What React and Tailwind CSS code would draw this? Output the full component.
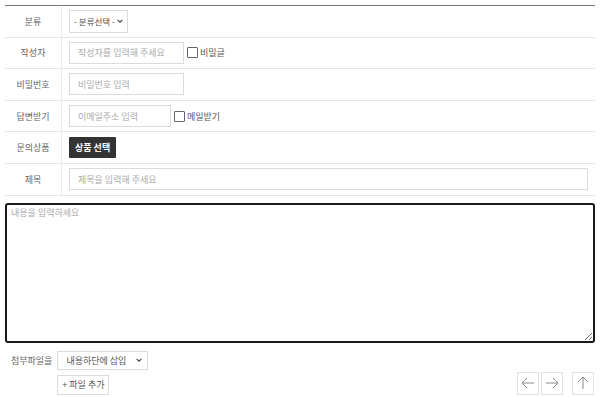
const font = { fontFamily: '"Noto Sans CJK KR", "Noto Sans", sans-serif' };

function Chevron({ className = '' }) {
    return (
        <svg viewBox="0 0 10 6" className={className} fill="none" stroke="#444" strokeWidth="1.8">
            <path d="M1 1l4 4 4-4" />
        </svg>
    );
}

function Check({ label }) {
    return (
        <div className="flex items-center gap-[2px]">
            <span className="w-[11px] h-[11px] border border-[#666] rounded-[1px] bg-white" />
            <span className="text-[9px] leading-none text-[#555]">{label}</span>
        </div>
    );
}

function Field({ w, placeholder }) {
    return (
        <div
            className={`${w} h-[22px] border border-[#dcdcdc] bg-white flex items-center px-[8px] text-[9px] leading-none text-[#aaa]`}
        >
            {placeholder}
        </div>
    );
}

function Row({ label, children }) {
    return (
        <div className="grid grid-cols-[57px_1fr] h-[31.6px] border-b border-[#e6e6e6]">
            <div className="flex items-center justify-center border-r border-[#ececec] text-[9px] leading-none text-[#666]">
                {label}
            </div>
            <div className="flex items-center pl-[7px] pr-[7px] gap-[3px]">{children}</div>
        </div>
    );
}

function ArrowBox({ children }) {
    return (
        <div className="w-[22px] h-[23px] border border-[#e2e2e2] bg-white flex items-center justify-center">
            <svg viewBox="0 0 16 16" className="w-[16px] h-[16px]" fill="none" stroke="#888" strokeWidth="1">
                {children}
            </svg>
        </div>
    );
}

export default function App() {
    return (
        <div className="w-[600px] h-[397px] bg-white overflow-hidden px-[5px] pt-[5px]" style={font}>
            {/* board table */}
            <div className="border-t border-[#777]">
                <Row label="분류">
                    <div className="w-[59px] h-[23px] border border-[#dcdcdc] flex items-center justify-between pl-[4px] pr-[4px] text-[8.5px] leading-none text-[#555] whitespace-nowrap">
                        <span>- 분류선택 -</span>
                        <Chevron className="w-[6px] h-[4px]" />
                    </div>
                </Row>
                <Row label="작성자">
                    <Field w="w-[115px]" placeholder="작성자를 입력해 주세요" />
                    <Check label="비밀글" />
                </Row>
                <Row label="비밀번호">
                    <Field w="w-[115px]" placeholder="비밀번호 입력" />
                </Row>
                <Row label="답변받기">
                    <Field w="w-[102px]" placeholder="이메일주소 입력" />
                    <Check label="메일받기" />
                </Row>
                <Row label="문의상품">
                    <div className="h-[21px] px-[6px] bg-[#333] text-white text-[9px] font-bold leading-none flex items-center rounded-[1px]">
                        상품 선택
                    </div>
                </Row>
                <Row label="제목">
                    <Field w="flex-1" placeholder="제목을 입력해 주세요" />
                </Row>
            </div>

            {/* content */}
            <textarea
                placeholder="내용을 입력하세요"
                className="mt-[7px] block w-full h-[140px] border-2 border-[#1a1a1a] rounded-[3px] px-[4px] py-[2px] text-[9px] leading-[12px] placeholder:text-[#aaa] outline-none"
            />

            {/* attachments */}
            <div className="flex justify-between mt-[8px]">
                <div className="flex pl-[6px] gap-[5px]">
                    <span className="text-[9px] leading-none text-[#666] pt-[5px]">첨부파일을</span>
                    <div className="flex flex-col gap-[5px]">
                        <div className="w-[91px] h-[19px] border border-[#dcdcdc] flex items-center justify-between pl-[8px] pr-[5px] text-[9px] leading-none text-[#555]">
                            <span>내용하단에 삽입</span>
                            <Chevron className="w-[6px] h-[4px]" />
                        </div>
                        <div className="w-[52px] h-[20px] border border-[#dcdcdc] flex items-center justify-center text-[9px] leading-none text-[#555]">
                            + 파일 추가
                        </div>
                    </div>
                </div>
                <div className="flex items-end gap-[9px] pr-[1px]">
                    <div className="flex gap-[2px]">
                        <ArrowBox>
                            <path d="M14 8H2M7 3L2 8l5 5" />
                        </ArrowBox>
                        <ArrowBox>
                            <path d="M2 8h12M9 3l5 5-5 5" />
                        </ArrowBox>
                    </div>
                    <ArrowBox>
                        <path d="M8 14V2M3 7l5-5 5 5" />
                    </ArrowBox>
                </div>
            </div>
        </div>
    );
}
